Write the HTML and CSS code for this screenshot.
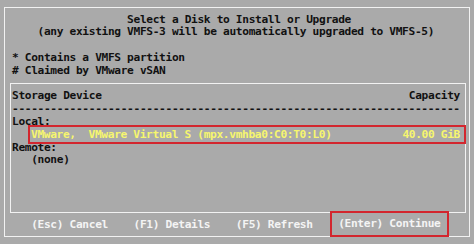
FILE: index.html
```html
<!DOCTYPE html>
<html>
<head>
<meta charset="utf-8">
<link rel="stylesheet" href="styles.css">
</head>
<body>
<div class="screen">
  <div class="frame">
    <div class="line">                  Select a Disk to Install or Upgrade</div>
    <div class="line">    (any existing VMFS-3 will be automatically upgraded to VMFS-5)</div>
    <div class="line"> </div>
    <div class="line">* Contains a VMFS partition</div>
    <div class="line"># Claimed by VMware vSAN</div>
    <div class="list">
      <div class="row"><span>Storage Device</span><span>Capacity</span></div>
      <div class="line dashes">----------------------------------------------------------------------</div>
      <div class="line">Local:</div>
      <div class="row sel"><span>VMware,  VMware Virtual S (mpx.vmhba0:C0:T0:L0)</span><span>40.00 GiB</span></div>
      <div class="line">Remote:</div>
      <div class="line">   (none)</div>
    </div>
    <div class="line keys">   (Esc) Cancel    (F1) Details    (F5) Refresh    <span class="hot">(Enter) Continue</span></div>
  </div>
</div>
</body>
</html>
```

FILE: styles.css
```css
html, body {
  margin: 0;
  padding: 0;
  background: #aaaaaa;
}

.screen {
  width: 474px;
  height: 244px;
  padding-top: 7px;
  box-sizing: border-box;
  background: #aaaaaa;
  font-family: "DejaVu Sans Mono", "Liberation Mono", monospace;
  font-weight: bold;
  font-size: 11.2px;
  letter-spacing: -0.34px;
  line-height: 14.6px;
  color: #111111;
}

.frame {
  margin-left: 4px;
  width: 466px;
  box-sizing: border-box;
  border: 1px solid #f2f2f2;
  padding: 4.6px 3px 5.4px 7px;
}

.line {
  white-space: pre;
  height: 12.8px;
}

.list {
  margin: 6.4px 0 0 -2px;
  border: 1px solid #f2f2f2;
  padding: 5.4px 5px 45.8px 1px;
}

.row {
  display: flex;
  justify-content: space-between;
  white-space: pre;
  height: 12.8px;
}

.dashes {
  overflow: hidden;
}

.sel {
  color: #f6f66e;
  margin-left: 19px;
  margin-right: -3px;
  padding-right: 3px;
  outline: 2px solid #d3262e;
  outline-offset: 1px;
}

.keys {
  margin-top: 4.8px;
  color: #f4f4f4;
}

.hot {
  display: inline-block;
  line-height: 12.8px;
  border: 2px solid #d3262e;
  padding: 4.8px 6px 4.4px 6px;
  margin: -6.8px -8px 0 -8px;
  vertical-align: top;
}
```
